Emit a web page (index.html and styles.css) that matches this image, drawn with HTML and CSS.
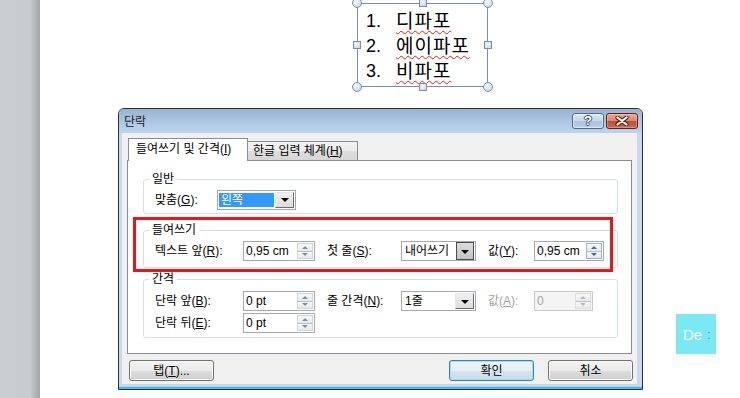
FILE: index.html
```html
<!DOCTYPE html>
<html lang="ko">
<head>
<meta charset="utf-8">
<title>단락</title>
<link rel="stylesheet" href="styles.css">
</head>
<body>
<div class="page">
  <div class="sidebar"></div>
  <div class="doc">
    <div class="textbox">
      <ul class="list">
        <li><span class="num">1.</span><span class="word">디파포</span></li>
        <li><span class="num">2.</span><span class="word">에이파포</span></li>
        <li><span class="num">3.</span><span class="word">비파포</span></li>
      </ul>
      <span class="handle circle tl"></span>
      <span class="handle square tm"></span>
      <span class="handle circle tr"></span>
      <span class="handle square ml"></span>
      <span class="handle square mr"></span>
      <span class="handle circle bl"></span>
      <span class="handle square bm"></span>
      <span class="handle circle br"></span>
    </div>

    <div class="dialog">
      <div class="titlebar">
        <span class="title">단락</span>
        <div class="capbtns">
          <span class="cap help">?</span>
          <span class="cap close">
            <svg width="14" height="10" viewBox="0 0 14 10">
              <path d="M2.5 1.5 L11.5 8.5 M11.5 1.5 L2.5 8.5" stroke="#4a2018" stroke-width="4.2" stroke-linecap="round"/>
              <path d="M2.5 1.5 L11.5 8.5 M11.5 1.5 L2.5 8.5" stroke="#ffffff" stroke-width="2.2" stroke-linecap="round"/>
            </svg>
          </span>
        </div>
      </div>
      <div class="client">
        <div class="tabs">
          <div class="tab active">들여쓰기 및 간격(<u>I</u>)</div>
          <div class="tab">한글 입력 체계(<u>H</u>)</div>
        </div>
        <div class="panel">
          <fieldset class="group g1">
            <legend>일반</legend>
            <div class="row">
              <span class="lbl align-lbl">맞춤(<u>G</u>):</span>
              <div class="combo w-align"><span class="ctext sel">왼쪽</span><span class="drop"></span></div>
            </div>
          </fieldset>

          <fieldset class="group g2">
            <legend>들여쓰기</legend>
            <div class="grid">
              <span class="lbl">텍스트 앞(<u>R</u>):</span>
              <div class="spin"><span class="val">0,95 cm</span><span class="arrows"><span class="up"></span><span class="dn"></span></span></div>
              <span class="lbl pad">첫 줄(<u>S</u>):</span>
              <div class="combo"><span class="ctext">내어쓰기</span><span class="drop hot"></span></div>
              <span class="lbl pad">값(<u>Y</u>):</span>
              <div class="spin hover"><span class="val">0,95 cm</span><span class="arrows"><span class="up"></span><span class="dn"></span></span></div>
            </div>
          </fieldset>

          <fieldset class="group g3">
            <legend>간격</legend>
            <div class="grid">
              <span class="lbl">단락 앞(<u>B</u>):</span>
              <div class="spin"><span class="val">0 pt</span><span class="arrows"><span class="up"></span><span class="dn"></span></span></div>
              <span class="lbl pad">줄 간격(<u>N</u>):</span>
              <div class="combo"><span class="ctext">1줄</span><span class="drop"></span></div>
              <span class="lbl pad disabled">값(<u>A</u>):</span>
              <div class="spin off"><span class="val">0</span><span class="arrows"><span class="up"></span><span class="dn"></span></span></div>

              <span class="lbl">단락 뒤(<u>E</u>):</span>
              <div class="spin"><span class="val">0 pt</span><span class="arrows"><span class="up"></span><span class="dn"></span></span></div>
            </div>
          </fieldset>

          <div class="highlight"></div>
        </div>
        <div class="footer">
          <span class="btn">탭(<u>T</u>)...</span>
          <span class="grow"></span>
          <span class="btn default">확인</span>
          <span class="btn">취소</span>
        </div>
      </div>
    </div>

    <div class="cyan"><span class="de">De</span><span class="colon">:</span></div>
  </div>
</div>
</body>
</html>
```

FILE: styles.css
```css
* { box-sizing: border-box; }
html, body { margin: 0; padding: 0; }
body {
  width: 740px;
  height: 398px;
  overflow: hidden;
  background: #ffffff;
  font-family: "Liberation Sans", "Noto Sans CJK KR", sans-serif;
  font-size: 12px;
  color: #000;
}
.page { display: flex; height: 398px; }
.sidebar {
  width: 40px;
  flex: none;
  background: linear-gradient(to right, #c9cdd2 0, #c8ccd1 30px, #b3b7bc 35px, #a2a6ab 40px);
}
.doc { position: relative; flex: 1; }

/* ---------- text box on the document ---------- */
.textbox {
  position: absolute;
  left: 317px;
  top: 3px;
  width: 131px;
  height: 84px;
  border: 1px solid #7d8fa8;
}
.list {
  list-style: none;
  margin: 0;
  padding: 5px 0 0 8px;
  font-family: "Liberation Sans", "Noto Sans CJK KR", sans-serif;
  font-size: 19px;
}
.list li { display: flex; height: 25px; line-height: 25px; white-space: nowrap; }
.num { width: 30px; font-size: 18px; }
.word {
  letter-spacing: 1px;
  text-decoration: underline wavy #e0201c;
  text-decoration-thickness: 1px;
  text-underline-offset: 2px;
}
.handle {
  position: absolute;
  background: radial-gradient(circle at 40% 35%, #f6f8fb, #c6d3e2);
  border: 1px solid #7b8ea8;
}
.circle { width: 10px; height: 10px; border-radius: 50%; }
.square { width: 8px; height: 8px; }
.tl { left: -6px; top: -6px; }
.tr { right: -6px; top: -6px; }
.bl { left: -6px; bottom: -6px; }
.br { right: -6px; bottom: -6px; }
.tm { left: calc(50% - 4px); top: -5px; }
.bm { left: calc(50% - 4px); bottom: -5px; }
.ml { left: -5px; top: calc(50% - 4px); }
.mr { right: -5px; top: calc(50% - 4px); }

/* ---------- dialog ---------- */
.dialog {
  position: absolute;
  left: 78px;
  top: 108px;
  width: 525px;
  height: 282px;
  border: 1px solid #27323f;
  border-radius: 6px 6px 0 0;
  background: #c6d9ee;
  box-shadow: inset 0 -2px 0 #4fb3e6, inset 0 -3px 0 #9fd6f2;
  display: flex;
  flex-direction: column;
  font-family: "Liberation Sans", "Noto Sans CJK KR", sans-serif;
}
.titlebar {
  height: 24px;
  flex: none;
  display: flex;
  align-items: flex-start;
  padding: 0 4px 0 5px;
  border-radius: 5px 5px 0 0;
  background: linear-gradient(#9ab3d1, #b0c9e5 60%, #bcd4ec);
}
.title {
  line-height: 26px;
  font-size: 12px;
  color: #1b1b1b;
}
.capbtns { margin-left: auto; margin-top: 4px; display: flex; gap: 2px; }
.cap {
  width: 32px;
  height: 16px;
  border-radius: 3px;
  display: flex;
  align-items: center;
  justify-content: center;
}
.help {
  border: 1px solid #52698a;
  background: linear-gradient(#dbe7f4, #c3d5ea 50%, #abc3df 51%, #b9cfe7);
  box-shadow: inset 0 0 0 1px rgba(255,255,255,0.45);
  color: #fff;
  font-weight: bold;
  font-size: 13px;
  line-height: 14px;
  text-shadow: 1px 0 0 #3a4a60, -1px 0 0 #3a4a60, 0 1px 0 #3a4a60, 0 -1px 0 #3a4a60;
}
.close {
  border: 1px solid #5c2419;
  background: linear-gradient(#e9a896, #d88670 50%, #c24a30 51%, #cf6b52);
  box-shadow: inset 0 0 0 1px rgba(255,220,210,0.35);
}

.client {
  height: 251px;
  flex: none;
  margin: 0 5px 0 3px;
  background: #f0f0f0;
  padding-top: 5px;
  display: flex;
  flex-direction: column;
}
.tabs {
  height: 22px;
  display: flex;
  align-items: flex-end;
  margin-left: 6px;
  position: relative;
  z-index: 2;
}
.tab {
  height: 19px;
  width: 110px;
  border: 1px solid #898c95;
  border-left: none;
  border-bottom: none;
  background: linear-gradient(#f3f3f3, #ebebeb 50%, #dddddd 51%, #d6d6d6);
  padding-left: 5px;
  line-height: 18px;
  white-space: nowrap;
}
.tab.active {
  height: 23px;
  width: 120px;
  margin-bottom: -1px;
  border-left: 1px solid #898c95;
  background: #ffffff;
  padding-left: 7px;
  line-height: 21px;
}
.panel {
  position: relative;
  height: 194px;
  margin: 0 5px 0 5px;
  border: 1px solid #898c95;
  background: #ffffff;
  padding: 0 13px 0 15px;
}
.group {
  margin: 0;
  min-width: 0;
  border: 1px solid #d5dfe5;
  border-radius: 3px;
  padding: 0 0 0 11px;
}
.group legend {
  padding: 0 3px;
  margin-left: -6px;
  line-height: 14px;
  font-size: 12px;
}
.g1 { margin-top: 11px; padding-top: 3px; padding-bottom: 3px; }
.g2 { margin-top: 9px; padding-top: 4px; padding-bottom: 6px; }
.g3 { margin-top: 4px; padding-top: 5px; padding-bottom: 4px; }

.row { display: flex; align-items: center; height: 21px; }
.lbl { line-height: 20px; white-space: nowrap; }
.align-lbl { width: 62px; }
.pad { padding-left: 12px; }
.disabled { color: #a3a3a3; }
.grid {
  display: grid;
  grid-template-columns: 88px 72px 86px 75px 58px 70px;
  row-gap: 2px;
  align-items: center;
}

/* combo */
.combo {
  height: 20px;
  border: 1px solid #a5a8ae;
  background: #fff;
  display: flex;
  align-items: center;
  padding: 1px;
}
.w-align { width: 79px; }
.ctext { flex: 1; padding-left: 2px; line-height: 16px; white-space: nowrap; }
.ctext.sel { background: #3399ff; color: #fff; margin-right: 1px; height: 14px; line-height: 14px; }
.drop {
  width: 19px;
  height: 16px;
  flex: none;
  border: 1px solid;
  border-color: #e6e6e6 #6e6e6e #6e6e6e #e6e6e6;
  background: linear-gradient(#f0f0f0, #dcdcdc);
  display: flex;
  align-items: center;
  justify-content: center;
}
.drop::after {
  content: "";
  border-left: 4px solid transparent;
  border-right: 4px solid transparent;
  border-top: 4px solid #000;
  margin-top: 1px;
}
.drop.hot {
  height: 18px;
  width: 18px;
  border-color: #4a4a4a;
  background: linear-gradient(#dcdcdc, #c4c4c4);
}

/* spin */
.spin {
  height: 20px;
  border: 1px solid #a5a8ae;
  background: #fff;
  display: flex;
  align-items: center;
}
.val { flex: 1; padding-left: 2px; white-space: nowrap; }
.arrows {
  width: 16px;
  height: 16px;
  margin-right: 1px;
  display: flex;
  flex-direction: column;
  border: 1px solid #cfd3da;
}
.up, .dn {
  flex: 1;
  display: flex;
  align-items: center;
  justify-content: center;
  background: linear-gradient(#f8f8f8, #e9e9e9);
}
.dn { border-top: 1px solid #b9bfc9; }
.up::after, .dn::after {
  content: "";
  border-left: 3px solid transparent;
  border-right: 3px solid transparent;
}
.up::after { border-bottom: 3px solid #7f8da8; }
.dn::after { border-top: 3px solid #7f8da8; }
.spin.hover .arrows { border-color: #9ab2d6; }
.spin.hover .up::after { border-bottom-color: #3f67b2; }
.spin.hover .dn::after { border-top-color: #3f67b2; }
.spin.off { width: 59px; background: #f4f4f4; border-color: #c9c9c9; color: #a3a3a3; }
.spin.off .arrows { border-color: #dcdcdc; }
.spin.off .up::after { border-bottom-color: #b9b9b9; }
.spin.off .dn::after { border-top-color: #b9b9b9; }

.highlight {
  position: absolute;
  left: 5px;
  top: 56px;
  width: 480px;
  height: 55px;
  border: 3px solid #e8161c;
  pointer-events: none;
}

/* footer buttons */
.footer {
  display: flex;
  margin-top: 6px;
  padding: 0 4px 0 7px;
  gap: 14px;
}
.grow { flex: 1; margin-left: -14px; }
.btn {
  width: 85px;
  height: 21px;
  border: 1px solid #707070;
  border-radius: 3px;
  background: linear-gradient(#f2f2f2, #ebebeb 50%, #dddddd 51%, #cfcfcf);
  box-shadow: inset 0 0 0 1px #fbfbfb;
  display: flex;
  align-items: center;
  justify-content: center;
  line-height: 18px;
}
.btn.default {
  border-color: #3c7fb1;
  box-shadow: inset 0 0 0 1px #9ee0f7;
  background: linear-gradient(#eef6fb, #e5eff6 50%, #d7e5ee 51%, #cbdbe6);
}

/* cyan tag */
.cyan {
  position: absolute;
  left: 636px;
  top: 314px;
  width: 40px;
  height: 40px;
  background: #7be9f3;
  display: flex;
  align-items: center;
  padding-left: 7px;
  font-family: "Liberation Sans", sans-serif;
  font-size: 15px;
}
.de { color: #f4fdff; }
.colon { color: #3a8ec0; margin-left: 5px; font-size: 13px; }
```
